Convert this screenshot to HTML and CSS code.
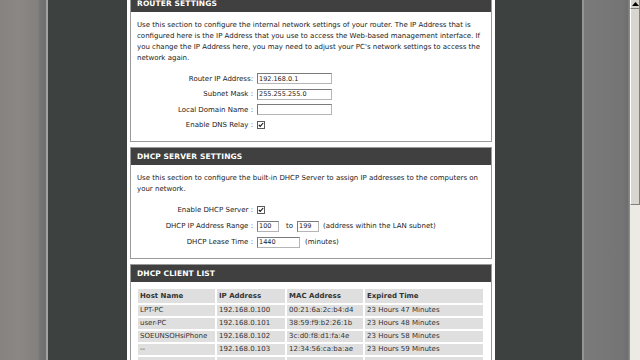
FILE: index.html
```html
<!DOCTYPE html>
<html lang="en">
<head>
  <meta charset="UTF-8" />
  <meta name="viewport" content="width=device-width, initial-scale=1.0" />
  <title>Setup - Network Settings</title>
  <link rel="stylesheet" href="styles.css">
</head>
<body>
  <div class="gutter"></div>
  <div class="side"></div>

  <main class="content">
    <section class="box">
      <h2 class="box-title">ROUTER SETTINGS</h2>
      <p class="intro">Use this section to configure the internal network settings of your router. The IP Address that is<br>configured here is the IP Address that you use to access the Web-based management interface. If<br>you change the IP Address here, you may need to adjust your PC's network settings to access the<br>network again.</p>
      <div class="fields">
        <div class="field">
          <label for="lanIp">Router IP Address:</label>
          <input type="text" id="lanIp" class="txt" value="192.168.0.1" />
        </div>
        <div class="field">
          <label for="lanMask">Subnet Mask :</label>
          <input type="text" id="lanMask" class="txt" value="255.255.255.0" />
        </div>
        <div class="field">
          <label for="domain">Local Domain Name :</label>
          <input type="text" id="domain" class="txt" value="" />
        </div>
        <div class="field">
          <label>Enable DNS Relay :</label>
          <svg class="check" width="8" height="8" viewBox="0 0 8 8"><rect x="0.5" y="0.5" width="7" height="7" fill="#fff" stroke="#5a5a5a"/><path d="M1.8 3.8 L3.2 5.4 L6.2 2" fill="none" stroke="#111" stroke-width="1.1"/></svg>
        </div>
      </div>
    </section>

    <section class="box">
      <h2 class="box-title">DHCP SERVER SETTINGS</h2>
      <p class="intro">Use this section to configure the built-in DHCP Server to assign IP addresses to the computers on<br>your network.</p>
      <div class="fields fields-dhcp">
        <div class="field">
          <label>Enable DHCP Server :</label>
          <svg class="check" width="8" height="8" viewBox="0 0 8 8"><rect x="0.5" y="0.5" width="7" height="7" fill="#fff" stroke="#5a5a5a"/><path d="M1.8 3.8 L3.2 5.4 L6.2 2" fill="none" stroke="#111" stroke-width="1.1"/></svg>
        </div>
        <div class="field">
          <label for="rangeStart">DHCP IP Address Range :</label>
          <input type="text" id="rangeStart" class="txt txt-short" value="100" />
          <span class="to">to</span>
          <input type="text" id="rangeEnd" class="txt txt-short" value="199" />
          <span class="note">(address within the LAN subnet)</span>
        </div>
        <div class="field">
          <label for="lease">DHCP Lease Time :</label>
          <input type="text" id="lease" class="txt txt-mid" value="1440" />
          <span class="note note-wide">(minutes)</span>
        </div>
      </div>
    </section>

    <section class="box">
      <h2 class="box-title">DHCP CLIENT LIST</h2>
      <table class="clients">
        <tr>
          <th class="col-host">Host Name</th>
          <th class="col-ip">IP Address</th>
          <th class="col-mac">MAC Address</th>
          <th class="col-time">Expired Time</th>
        </tr>
        <tr><td>LPT-PC</td><td>192.168.0.100</td><td>00:21:6a:2c:b4:d4</td><td>23 Hours 47 Minutes</td></tr>
        <tr><td>user-PC</td><td>192.168.0.101</td><td>38:59:f9:b2:26:1b</td><td>23 Hours 48 Minutes</td></tr>
        <tr><td>SOEUNSOHsiPhone</td><td>192.168.0.102</td><td>3c:d0:f8:d1:fa:4e</td><td>23 Hours 58 Minutes</td></tr>
        <tr><td>--</td><td>192.168.0.103</td><td>12:34:56:ca:ba:ae</td><td>23 Hours 59 Minutes</td></tr>
        <tr><td></td><td></td><td></td><td></td></tr>
      </table>
    </section>
  </main>

  <div class="side side-right"></div>
  <div class="gutter gutter-right"></div>

  <div class="scrollbar">
    <div class="scroll-btn">
      <svg width="7" height="4" viewBox="0 0 7 4"><path d="M0 4 L3.5 0 L7 4 Z" fill="#000"/></svg>
    </div>
    <div class="scroll-thumb"></div>
  </div>
</body>
</html>
```

FILE: styles.css
```css
* {
  margin: 0;
  padding: 0;
  box-sizing: border-box;
}

body {
  display: flex;
  height: 360px;
  overflow: hidden;
  font-family: "DejaVu Sans", Verdana, sans-serif;
  font-size: 7px;
  color: #222;
  background: #3d4140;
}

/* outer page frame */
.gutter {
  width: 48px;
  background: linear-gradient(to right, #858280 0, #8a8784 18px, #83807e 38px, #747474 40px, #6f6f6f 46px, #a2a2a2 46px, #a2a2a2 48px);
}

.gutter-right {
  background: linear-gradient(to right, #949494 0, #949494 2px, #7a7a7a 2px, #757575 40px, #6e6e6e 46px, #8a8a8a 47px);
}

.side {
  width: 79px;
  background: #3d4140;
}

.side-right {
  width: 87px;
}

.content {
  width: 368px;
  background: #fff;
  padding: 0 3px;
}

/* section boxes */
.box {
  border: 1px solid #9a9a9a;
  margin-bottom: 5px;
}

.box:first-child {
  margin-top: -6px;
}

.box-title {
  height: 17px;
  line-height: 17px;
  padding-left: 6px;
  background: #404040;
  color: #fff;
  font-size: 7.5px;
  font-weight: bold;
  letter-spacing: 0.1px;
}

.intro {
  margin-top: 7.5px;
  padding: 0 6px;
  line-height: 11px;
  white-space: nowrap;
}

.fields {
  margin-top: 7.5px;
  padding-bottom: 8px;
}

.field {
  display: flex;
  align-items: center;
  height: 15.5px;
}

.fields-dhcp .field {
  height: 16px;
}

.field label {
  width: 122px;
  margin-right: 4px;
  text-align: right;
}

.txt {
  width: 75px;
  height: 11px;
  padding: 0 1px;
  border: 1px solid #b5b5b5;
  border-top-color: #7a7a7a;
  border-left-color: #7a7a7a;
  font-family: "DejaVu Sans", Verdana, sans-serif;
  font-size: 6.5px;
  color: #222;
  background: #fff;
}

.txt-short {
  width: 22px;
}

.txt-mid {
  width: 43px;
}

.to {
  margin: 0 4px 0 7px;
}

.note {
  margin-left: 4px;
}

.note-wide {
  margin-left: 5px;
}

.check {
  display: block;
}

/* client table */
.clients {
  width: 349px;
  margin: 5px 0 8px 5px;
  border-spacing: 2px;
  table-layout: fixed;
}

.clients th,
.clients td {
  background: #dfdfdf;
  text-align: left;
  padding: 0 2px;
  height: 11px;
  line-height: 11px;
  white-space: nowrap;
  overflow: hidden;
  color: #333;
}

.clients th {
  height: 14px;
  font-weight: bold;
}

.col-host { width: 77px; }
.col-ip { width: 68px; }
.col-mac { width: 76px; }
.col-time { width: 118px; }

/* window scrollbar */
.scrollbar {
  width: 10px;
  display: flex;
  flex-direction: column;
  background: #ebeae4;
}

.scroll-btn {
  height: 9px;
  display: flex;
  justify-content: center;
  align-items: center;
  background: #d6d3cc;
  border-right: 1px solid #808080;
  border-bottom: 1px solid #808080;
  border-left: 1px solid #fff;
}

.scroll-thumb {
  height: 196px;
  background: #d9d6cf;
  border-left: 1px solid #fff;
  border-right: 1px solid #808080;
  border-bottom: 1px solid #808080;
}
```
